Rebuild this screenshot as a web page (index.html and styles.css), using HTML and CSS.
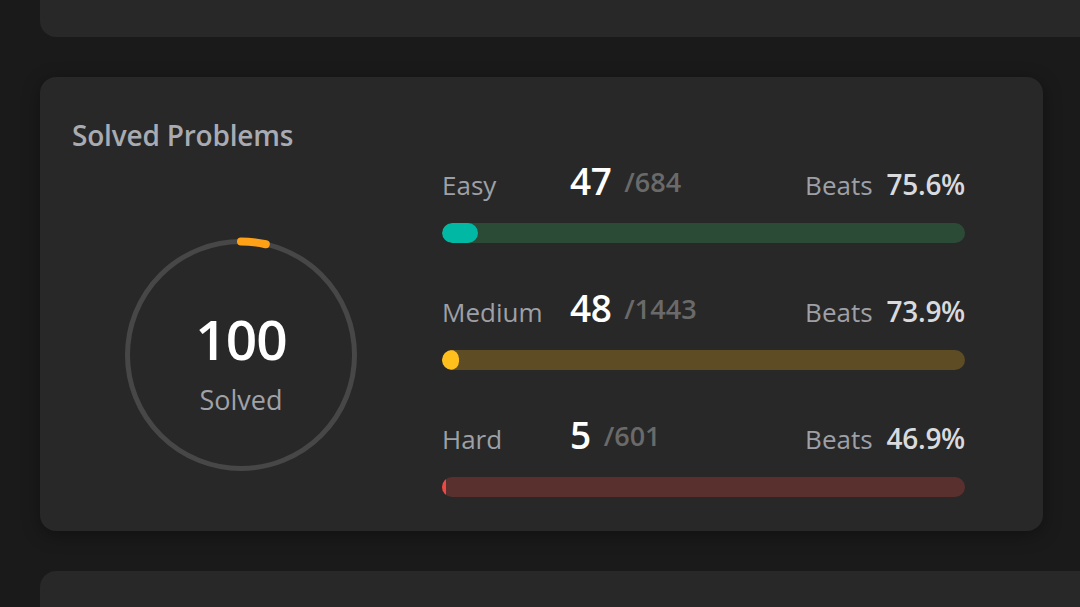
FILE: index.html
```html
<!DOCTYPE html>
<html lang="en">
<head>
<meta charset="utf-8">
<title>Solved Problems</title>
<link rel="stylesheet" href="styles.css">
</head>
<body>
<div class="page">
  <div class="card card-top"></div>
  <section class="card card-solved">
    <div class="left-col">
      <h2 class="title">Solved Problems</h2>
      <div class="ring">
        <svg class="ring-svg" width="240" height="240" viewBox="0 0 240 240">
          <circle cx="120" cy="120" r="113.5" fill="none" stroke="#474747" stroke-width="5"/>
          <circle cx="120" cy="120" r="113.5" fill="none" stroke="#ffa116" stroke-width="8" stroke-linecap="round" stroke-dasharray="25 713" transform="rotate(-90 120 120)"/>
        </svg>
        <div class="ring-text">
          <div class="ring-count">100</div>
          <div class="ring-label">Solved</div>
        </div>
      </div>
    </div>
    <div class="right-col">
      <div class="diff-row">
        <div class="diff-head">
          <span class="diff-label">Easy</span>
          <span class="count"><span class="diff-num">47</span><span class="diff-total">/684</span></span>
          <span class="spacer"></span>
          <span class="beats">Beats</span>
          <span class="pct">75.6%</span>
        </div>
        <div class="bar bar-easy"><div class="fill" style="width:6.9%"></div></div>
      </div>
      <div class="diff-row">
        <div class="diff-head">
          <span class="diff-label">Medium</span>
          <span class="count"><span class="diff-num">48</span><span class="diff-total">/1443</span></span>
          <span class="spacer"></span>
          <span class="beats">Beats</span>
          <span class="pct">73.9%</span>
        </div>
        <div class="bar bar-medium"><div class="fill" style="width:3.3%"></div></div>
      </div>
      <div class="diff-row">
        <div class="diff-head">
          <span class="diff-label">Hard</span>
          <span class="count"><span class="diff-num">5</span><span class="diff-total">/601</span></span>
          <span class="spacer"></span>
          <span class="beats">Beats</span>
          <span class="pct">46.9%</span>
        </div>
        <div class="bar bar-hard"><div class="fill" style="width:0.83%"></div></div>
      </div>
    </div>
  </section>
  <div class="card card-bottom"></div>
</div>
</body>
</html>
```
FILE: styles.css
```css
* { box-sizing: border-box; }
html, body {
  margin: 0;
  padding: 0;
  background: #1a1a1a;
  overflow: hidden;
  font-family: "Open Sans", "Noto Sans", sans-serif;
}
.page {
  width: 1080px;
  height: 607px;
  padding-left: 40px;
  display: flex;
  flex-direction: column;
  align-items: flex-start;
  gap: 40px;
  overflow: hidden;
}
.card {
  background: #282828;
  flex-shrink: 0;
}
.card-top {
  width: 1040px;
  height: 37px;
  border-radius: 0 0 0 16px;
}
.card-bottom {
  width: 1040px;
  height: 36px;
  border-radius: 16px 0 0 0;
}
.card-solved {
  width: 1003px;
  height: 454px;
  border-radius: 16px;
  padding: 40px 32px 34px;
  display: grid;
  grid-template-columns: 338px 523px;
  column-gap: 32px;
  box-shadow: 0 4px 18px rgba(0, 0, 0, 0.35);
}
.left-col {
  display: flex;
  flex-direction: column;
  align-items: center;
}
.title {
  align-self: flex-start;
  margin: 0;
  font-size: 28px;
  line-height: 36px;
  font-weight: 600;
  color: #a8abb2;
  letter-spacing: -0.2px;
}
.ring {
  margin-top: 82px;
  width: 240px;
  height: 240px;
  display: grid;
}
.ring-svg, .ring-text {
  grid-area: 1 / 1;
}
.ring-text {
  align-self: center;
  justify-self: center;
  padding-top: 16px;
  display: flex;
  flex-direction: column;
  align-items: center;
  gap: 13px;
}
.ring-count {
  font-size: 55px;
  line-height: 60px;
  font-weight: 600;
  color: #ffffff;
  letter-spacing: -1px;
}
.ring-label {
  font-size: 27px;
  line-height: 36px;
  color: #a0a2a8;
}
.right-col {
  margin-top: 44px;
  display: flex;
  flex-direction: column;
  gap: 45px;
}
.diff-row {
  display: flex;
  flex-direction: column;
  gap: 22px;
}
.diff-head {
  height: 40px;
  display: flex;
  align-items: baseline;
  line-height: 40px;
}
.diff-label {
  width: 128px;
  font-size: 26px;
  color: #9ea0a7;
}
.count {
  white-space: nowrap;
}
.diff-num {
  font-size: 37px;
  font-weight: 600;
  color: #ffffff;
  letter-spacing: -0.5px;
}
.diff-total {
  margin-left: 13px;
  font-size: 27px;
  font-weight: 600;
  color: #6a6a6a;
  vertical-align: 3px;
}
.spacer { flex: 1; }
.beats {
  font-size: 26px;
  color: #9ea0a7;
}
.pct {
  margin-left: 14px;
  font-size: 28px;
  font-weight: 600;
  color: #d9dade;
  letter-spacing: -0.3px;
}
.bar {
  height: 20px;
  border-radius: 10px;
  overflow: hidden;
}
.fill {
  height: 100%;
  border-radius: 10px;
}
.bar-easy { background: #2c4b36; }
.bar-easy .fill { background: #00b8a3; }
.bar-medium { background: #5d4c24; }
.bar-medium .fill { background: #ffc01e; min-width: 17px; }
.bar-hard { background: #5a302e; }
.bar-hard .fill { background: #ef4743; }
```
